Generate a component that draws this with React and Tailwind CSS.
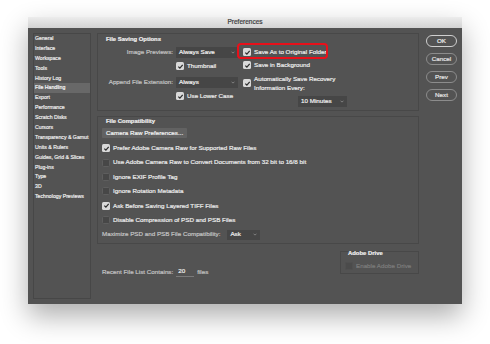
import React from 'react';

const sections = [
  'General',
  'Interface',
  'Workspace',
  'Tools',
  'History Log',
  'File Handling',
  'Export',
  'Performance',
  'Scratch Disks',
  'Cursors',
  'Transparency & Gamut',
  'Units & Rulers',
  'Guides, Grid & Slices',
  'Plug-ins',
  'Type',
  '3D',
  'Technology Previews',
];

const compatOptions = [
  { label: 'Prefer Adobe Camera Raw for Supported Raw Files', checked: true },
  { label: 'Use Adobe Camera Raw to Convert Documents from 32 bit to 16/8 bit', checked: false },
  { label: 'Ignore EXIF Profile Tag', checked: false },
  { label: 'Ignore Rotation Metadata', checked: false },
  { label: 'Ask Before Saving Layered TIFF Files', checked: true },
  { label: 'Disable Compression of PSD and PSB Files', checked: false },
];

const Check = ({ checked = true, disabled = false }) => (
  <span
    className={
      checked
        ? 'flex h-[8px] w-[8px] shrink-0 items-center justify-center rounded-[1.5px] bg-[#d9d9d9]'
        : disabled
        ? 'flex h-[8px] w-[8px] shrink-0 rounded-[1.5px] border border-[#505050] bg-[#4b4b4b]'
        : 'flex h-[8px] w-[8px] shrink-0 rounded-[1.5px] border border-[#5e5e5e] bg-[#474747]'
    }
  >
    {checked && (
      <svg viewBox="0 0 8 8" className="h-[7px] w-[7px]">
        <path d="M1.5 4.1 L3.3 5.9 L6.5 2.1" fill="none" stroke="#2c2c2c" strokeWidth="1.4" />
      </svg>
    )}
  </span>
);

const Chevron = () => (
  <svg viewBox="0 0 6 4" className="h-[3px] w-[4px]">
    <path d="M0.8 0.8 L3 3 L5.2 0.8" fill="none" stroke="#a0a0a0" strokeWidth="1" />
  </svg>
);

const Select = ({ value, className }) => (
  <div className={`flex items-center justify-between bg-[#464646] pl-[3px] pr-[3px] text-[#f2f2f2] ${className}`}>
    <span>{value}</span>
    <Chevron />
  </div>
);

const CheckRow = ({ label, checked, className = '' }) => (
  <div className={`flex items-center gap-[3px] ${className}`}>
    <Check checked={checked} />
    <span className="text-[#ececec]">{label}</span>
  </div>
);

const Button = ({ label, primary }) => (
  <div
    className={
      primary
        ? 'flex h-[12px] w-[31px] items-center justify-center rounded-full border-[1.5px] border-[#cfcfcf] text-[#f0f0f0]'
        : 'flex h-[12px] w-[31px] items-center justify-center rounded-full border border-[#8c8c8c] text-[#e6e6e6]'
    }
  >
    {label}
  </div>
);

export default function App() {
  return (
    <div
      className="h-[344px] w-[490px] overflow-hidden bg-white pt-[17px] pl-[28px] text-[6.25px] leading-none [-webkit-text-stroke:0.2px_currentcolor]"
      style={{ fontFamily: '"Liberation Sans", Arial, sans-serif' }}
    >
      <div className="flex h-[287px] w-[434px] flex-col shadow-[0_12px_26px_rgba(0,0,0,0.32)]">
        {/* Title bar */}
        <div className="flex h-[11px] items-center justify-center bg-gradient-to-b from-[#ececec] to-[#d3d3d3] text-[6.5px] text-[#3a3a3a]">
          Preferences
        </div>

        <div className="flex flex-1 bg-[#535353] p-[5px]">
          {/* Sidebar */}
          <div className="h-[266px] w-[58px] border border-[#474747]">
            {sections.map((s) => (
              <div
                key={s}
                className={
                  s === 'File Handling'
                    ? 'h-[9.9px] bg-[#686868] pl-[1px] text-[5.2px] leading-[9.9px] text-[#f4f4f4]'
                    : 'h-[9.9px] pl-[1px] text-[5.2px] leading-[9.9px] text-[#ececec]'
                }
              >
                {s}
              </div>
            ))}
          </div>

          {/* Main */}
          <div className="ml-[6px] flex w-[322px] flex-col">
            {/* File Saving Options */}
            <div className="h-[78px] border border-[#484848] pt-[1px]">
              <div className="pl-[8px] text-[5.9px] font-bold leading-[8px] text-[#f0f0f0]">File Saving Options</div>
              <div className="mt-[3px] flex">
                <div className="flex flex-col">
                  <div className="flex h-[12px] items-center">
                    <span className="w-[75px] text-right text-[#c4c4c4]">Image Previews:</span>
                    <Select value="Always Save" className="ml-[3px] h-[11px] w-[62px]" />
                  </div>
                  <CheckRow label="Thumbnail" checked className="mt-[2px] ml-[78px] h-[12px]" />
                  <div className="mt-[4px] flex h-[12px] items-center">
                    <span className="w-[75px] text-right text-[#c4c4c4]">Append File Extension:</span>
                    <Select value="Always" className="ml-[3px] h-[11px] w-[62px]" />
                  </div>
                  <CheckRow label="Use Lower Case" checked className="mt-[2px] ml-[78px] h-[12px]" />
                </div>

                <div className="ml-[5px] flex flex-col">
                  <div className="relative">
                    <CheckRow label="Save As to Original Folder" checked className="h-[12px]" />
                    <div className="absolute -top-[3px] -left-[6px] h-[16px] w-[91px] rounded-[4px] border-2 border-[#e8101a]" />
                  </div>
                  <CheckRow label="Save in Background" checked className="mt-[1px] h-[12px]" />
                  <div className="mt-[3px] flex items-center gap-[3px]">
                    <Check />
                    <div className="leading-[9px] text-[#ececec]">
                      <div>Automatically Save Recovery</div>
                      <div>Information Every:</div>
                    </div>
                  </div>
                  <Select value="10 Minutes" className="mt-[4px] ml-[55px] h-[11px] w-[49px]" />
                </div>
              </div>
            </div>

            {/* File Compatibility */}
            <div className="mt-[5px] h-[128px] border border-[#484848]">
              <div className="pl-[8px] text-[5.9px] font-bold leading-[8px] text-[#f0f0f0]">File Compatibility</div>
              <div className="mt-[3px] ml-[4px] flex h-[10px] w-[85px] items-center rounded-[1px] bg-[#626262] pl-[4px] text-[#f4f4f4]">
                Camera Raw Preferences...
              </div>
              <div className="mt-[3px] ml-[4px] flex flex-col">
                {compatOptions.map((o) => (
                  <CheckRow key={o.label} label={o.label} checked={o.checked} className="h-[14.4px]" />
                ))}
                <div className="flex h-[14.4px] items-center">
                  <span className="text-[#c4c4c4]">Maximize PSD and PSB File Compatibility:</span>
                  <Select value="Ask" className="ml-[7px] h-[10px] w-[33px]" />
                </div>
              </div>
            </div>

            {/* Bottom row */}
            <div className="mt-[7px] flex justify-between">
              <div className="mt-[16px] flex h-[10px] items-center pl-[5px]">
                <span className="text-[#c4c4c4]">Recent File List Contains:</span>
                <span className="ml-[3px] flex h-[10px] w-[18px] items-center border-b border-[#7a7a7a] pl-[2px] text-[#f0f0f0]">20</span>
                <span className="ml-[3px] text-[#c4c4c4]">files</span>
              </div>
              <div className="h-[23px] w-[79px] border border-[#484848]">
                <div className="-mt-[2px] pl-[7px] text-[5.9px] font-bold leading-[7px] text-[#f0f0f0]">Adobe Drive</div>
                <div className="mt-[5px] flex items-center gap-[3px] pl-[4px]">
                  <Check checked={false} disabled />
                  <span className="text-[#7c7c7c]">Enable Adobe Drive</span>
                </div>
              </div>
            </div>
          </div>

          {/* Buttons */}
          <div className="ml-[7px] flex w-[31px] flex-col gap-[6px] pt-[2px]">
            <Button label="OK" primary />
            <Button label="Cancel" />
            <Button label="Prev" />
            <Button label="Next" />
          </div>
        </div>
      </div>
    </div>
  );
}
